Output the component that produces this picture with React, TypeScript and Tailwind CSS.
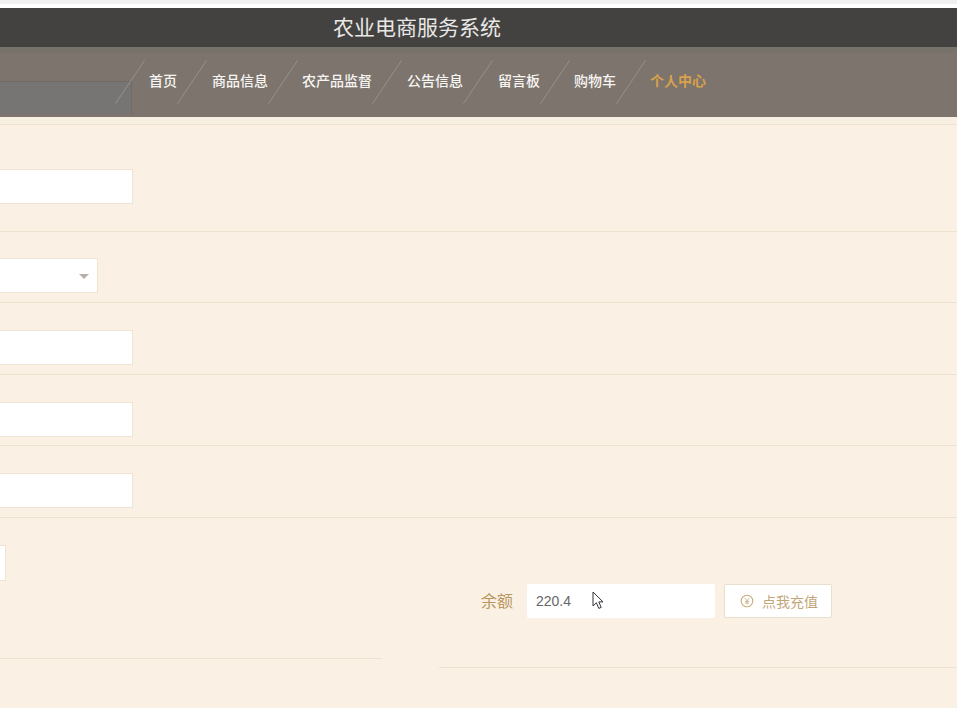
const FONT = "font-['Microsoft_YaHei','Noto_Sans_CJK_SC','Liberation_Sans',sans-serif]";

const navItems = [
  { label: "首页", pad: "pl-[34px]" },
  { label: "商品信息", pad: "pl-[35px]" },
  { label: "农产品监督", pad: "pl-[34px]" },
  { label: "公告信息", pad: "pl-[35px]" },
  { label: "留言板", pad: "pl-[35px]" },
  { label: "购物车", pad: "pl-[34px]" },
  { label: "个人中心", pad: "pl-[34px]", active: true },
];

// the slanted divider in front of every nav link
const Slash = () => (
  <svg width="30" height="44" viewBox="0 0 30 44" className="absolute left-0 top-0">
    <line x1="29.5" y1="0.5" x2="0.5" y2="43.5" stroke="#9a9187" strokeWidth="1" />
  </svg>
);

const Field = ({ width = "w-[133px]", value = "" }: { width?: string; value?: string }) => (
  <input
    readOnly
    value={value}
    className={`${width} h-[35px] block bg-white border border-l-0 border-[#efe3d2] outline-none`}
  />
);

const Row = ({ children, top }: { children: React.ReactNode; top: string }) => (
  <div className={`border-t border-[#eee2cf] ${top}`}>{children}</div>
);

export default function App() {
  return (
    <div className={`${FONT} w-[957px] h-[708px] overflow-hidden relative bg-[#faf0e4]`}>
      <div className="h-1 bg-[#f0f0f0]" />
      <div className="h-1 bg-white" />

      <div className="h-[39px] bg-[#434240] pl-[333px] pb-[2px] flex items-center">
        <span className="text-[21px] leading-none text-[#e8e8e6]">农业电商服务系统</span>
      </div>

      <div className="h-[70px] bg-[#7c746d] border-t-[6px] border-[#77736b] flex">
        <div className="w-[132px] h-[33px] mt-[28px] bg-[#767573] border-t border-r border-[#6f6c67] shrink-0" />
        <ul className="flex -ml-[17px] mt-[7px]">
          {navItems.map((item) => (
            <li
              key={item.label}
              className={`relative ${item.pad} h-[44px] text-sm leading-[40px] whitespace-nowrap ${
                item.active ? "text-[#d8a24c] font-bold" : "text-[#f7f5f2] font-medium"
              }`}
            >
              <Slash />
              {item.label}
            </li>
          ))}
        </ul>
      </div>

      <div className="h-[7px] bg-[#f8efe3]" />

      <Row top="pt-[44px] pb-[27px]">
        <Field />
      </Row>
      <Row top="pt-[26px] pb-[9px]">
        <div className="relative w-[98px] h-[35px] bg-white border border-l-0 border-[#efe3d2]">
          <span className="absolute right-[8px] top-[15px] border-x-[5px] border-t-[5px] border-x-transparent border-t-[#b5b0aa]" />
        </div>
      </Row>
      <Row top="pt-[27px] pb-[9px]">
        <Field />
      </Row>
      <Row top="pt-[27px] pb-[8px]">
        <Field />
      </Row>
      <Row top="pt-[27px] pb-[9px]">
        <Field />
      </Row>

      <div className="border-t border-[#eee2cf] flex items-start">
        <div className="w-[382px] pt-[27px] pb-[77px] border-b border-[#eee2cf] shrink-0">
          <Field width="w-[6px] !h-[36px]" />
        </div>
        <div className="ml-[57px] flex-1 pt-[66px] pb-[49px] pl-[42px] border-b border-[#eee2cf] flex items-center">
          <span className="w-[46px] text-base leading-[30px] -mt-[3px] text-[#b9975f]">余额</span>
          <input
            readOnly
            value="220.4"
            className="w-[188px] h-[34px] pl-[9px] bg-white rounded-[2px] text-sm text-[#666] font-['Liberation_Sans',sans-serif] outline-none"
          />
          <button className="ml-[9px] w-[108px] h-[34px] pl-[15px] bg-white border border-[#eadfce] rounded-[2px] text-sm text-[#c2a67a] flex items-center">
            <svg width="14" height="14" viewBox="0 0 14 14" className="mr-[8px] shrink-0" fill="none" stroke="#c9ad7d">
              <circle cx="7" cy="7" r="5.8" strokeWidth="1.1" />
              <path d="M4.8 3.8 7 7l2.2-3.2M7 7v3.4M4.9 7.4h4.2M4.9 9h4.2" strokeWidth="0.8" />
            </svg>
            <span className="-mt-[1px]">点我充值</span>
          </button>
        </div>
      </div>

      {/* mouse pointer captured in the shot */}
      <svg width="13" height="19" viewBox="0 0 13 19" className="absolute left-[592px] top-[591px]">
        <path
          d="M1 1v14l3.4-3.2 2.4 5.6 2.4-1-2.4-5.5H11Z"
          fill="#fff"
          stroke="#33343a"
          strokeWidth="1"
          strokeLinejoin="round"
        />
      </svg>
    </div>
  );
}
